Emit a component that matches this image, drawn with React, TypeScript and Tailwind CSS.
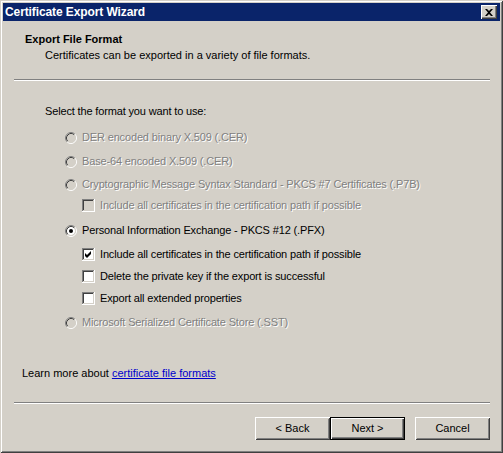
import React from "react";

const font = { fontFamily: '"Liberation Sans", Arial, sans-serif' };

function Radio({ checked, disabled }: { checked?: boolean; disabled?: boolean }) {
  return (
    <svg width="12" height="12" viewBox="0 0 12 12" className="shrink-0">
      <circle cx="6" cy="6" r="4" fill={disabled ? "#d4d0c8" : "#ffffff"} />
      <path d="M2.11 9.89 A5.5 5.5 0 0 1 9.89 2.11" fill="none" stroke="#808080" strokeWidth="1" />
      <path d="M9.89 2.11 A5.5 5.5 0 0 1 2.11 9.89" fill="none" stroke="#ffffff" strokeWidth="1" />
      <path d="M2.82 9.18 A4.5 4.5 0 0 1 9.18 2.82" fill="none" stroke="#404040" strokeWidth="1" />
      <path d="M9.18 2.82 A4.5 4.5 0 0 1 2.82 9.18" fill="none" stroke="#d4d0c8" strokeWidth="1" />
      {checked && <circle cx="6" cy="6" r="2" fill="#000000" />}
    </svg>
  );
}

function Check({ checked, disabled }: { checked?: boolean; disabled?: boolean }) {
  return (
    <svg width="13" height="13" viewBox="0 0 13 13" className="shrink-0">
      <rect x="0" y="0" width="13" height="13" fill="#ffffff" />
      <rect x="1" y="1" width="11" height="11" fill="#d4d0c8" />
      <rect x="0" y="0" width="12" height="1" fill="#808080" />
      <rect x="0" y="0" width="1" height="12" fill="#808080" />
      <rect x="1" y="1" width="10" height="1" fill="#404040" />
      <rect x="1" y="1" width="1" height="10" fill="#404040" />
      <rect x="2" y="2" width="9" height="9" fill={disabled ? "#d4d0c8" : "#ffffff"} />
      {checked && (
        <path d="M3 5 L5 7 L9 3 L9 6 L5 10 L3 8 Z" fill="#000000" />
      )}
    </svg>
  );
}

const disabledText = "text-[#808080] [text-shadow:1px_1px_0_#ffffff]";

function Btn({ children, def }: { children: React.ReactNode; def?: boolean }) {
  return (
    <div
      className={
        def
          ? "w-[75px] h-[23px] flex items-center justify-center border border-black bg-[#d4d0c8] shadow-[inset_1px_1px_0_#ffffff,inset_-1px_-1px_0_#404040,inset_-2px_-2px_0_#808080] text-[11px] text-black"
          : "w-[75px] h-[23px] flex items-center justify-center bg-[#d4d0c8] shadow-[inset_1px_1px_0_#ffffff,inset_-1px_-1px_0_#404040,inset_2px_2px_0_#d4d0c8,inset_-2px_-2px_0_#808080] text-[11px] text-black"
      }
    >
      {children}
    </div>
  );
}

export default function App() {
  return (
    <div
      style={font}
      className="w-[503px] h-[453px] bg-[#d4d0c8] flex flex-col p-[3px] shadow-[inset_1px_1px_0_#d4d0c8,inset_-1px_-1px_0_#404040,inset_2px_2px_0_#ffffff,inset_-2px_-2px_0_#808080] text-[11px] text-black"
    >
      {/* Title bar */}
      <div className="h-[18px] bg-[#0a246a] flex items-center justify-between pl-[2px] pr-[3px]">
        <span className="text-white font-bold text-[12px] leading-[18px] tracking-[-0.1px]">Certificate Export Wizard</span>
        <div className="w-[16px] h-[14px] bg-[#d4d0c8] shadow-[inset_1px_1px_0_#ffffff,inset_-1px_-1px_0_#404040,inset_-2px_-2px_0_#808080] flex items-center justify-center">
          <svg width="8" height="7" viewBox="0 0 8 7">
            <path d="M0 0 H2 L4 2 L6 0 H8 L5 3.5 L8 7 H6 L4 5 L2 7 H0 L3 3.5 Z" fill="#000000" />
          </svg>
        </div>
      </div>

      {/* Header */}
      <div className="h-[58px] pl-[22px] pt-[12px] flex flex-col">
        <div className="font-bold leading-[13px]">Export File Format</div>
        <div className="leading-[13px] mt-[3px] pl-[20px]">Certificates can be exported in a variety of file formats.</div>
      </div>
      <div className="ml-[11px] mr-[10px] border-t border-t-[#808080] border-b border-b-white" />

      {/* Body */}
      <div className="flex flex-col pl-[42px] pt-[24px] tracking-[-0.15px]">
        <div className="leading-[13px]">Select the format you want to use:</div>

        <div className="flex items-center h-[13px] mt-[13px] pl-[20px] gap-[5px]">
          <Radio disabled />
          <span className={disabledText}>DER encoded binary X.509 (.CER)</span>
        </div>
        <div className="flex items-center h-[13px] mt-[11px] pl-[20px] gap-[5px]">
          <Radio disabled />
          <span className={disabledText}>Base-64 encoded X.509 (.CER)</span>
        </div>
        <div className="flex items-center h-[13px] mt-[10px] pl-[20px] gap-[5px]">
          <Radio disabled />
          <span className={disabledText}>Cryptographic Message Syntax Standard - PKCS #7 Certificates (.P7B)</span>
        </div>
        <div className="flex items-center h-[13px] mt-[8px] pl-[37px] gap-[5px]">
          <Check disabled />
          <span className={disabledText}>Include all certificates in the certification path if possible</span>
        </div>
        <div className="flex items-center h-[13px] mt-[12px] pl-[20px] gap-[5px]">
          <Radio checked />
          <span>Personal Information Exchange - PKCS #12 (.PFX)</span>
        </div>
        <div className="flex items-center h-[13px] mt-[11px] pl-[37px] gap-[5px]">
          <Check checked />
          <span>Include all certificates in the certification path if possible</span>
        </div>
        <div className="flex items-center h-[13px] mt-[9px] pl-[37px] gap-[5px]">
          <Check />
          <span>Delete the private key if the export is successful</span>
        </div>
        <div className="flex items-center h-[13px] mt-[9px] pl-[37px] gap-[5px]">
          <Check />
          <span>Export all extended properties</span>
        </div>
        <div className="flex items-center h-[13px] mt-[11px] pl-[20px] gap-[5px]">
          <Radio disabled />
          <span className={disabledText}>Microsoft Serialized Certificate Store (.SST)</span>
        </div>
      </div>

      <div className="pl-[19px] mt-[38px] leading-[13px]">
        Learn more about <span className="text-[#0000cc] underline">certificate file formats</span>
      </div>

      <div className="mt-[22px] ml-[11px] mr-[10px] border-t border-t-[#808080] border-b border-b-white" />

      <div className="flex justify-end mr-[10px] mt-[13px]">
        <Btn>&lt; Back</Btn>
        <Btn def>Next &gt;</Btn>
        <div className="w-[10px]" />
        <Btn>Cancel</Btn>
      </div>
    </div>
  );
}
